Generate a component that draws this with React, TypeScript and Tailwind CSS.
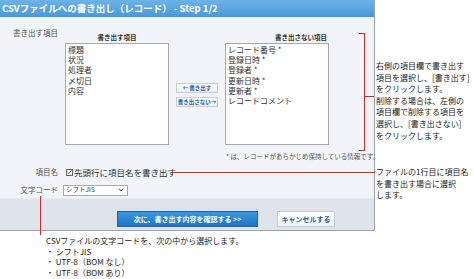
const jp = "font-['Noto_Sans_CJK_JP','Noto_Sans',sans-serif]";

const leftItems = ["標題", "状況", "処理者", "〆切日", "内容"];
const rightItems = ["レコード番号 *", "登録日時 *", "登録者 *", "更新日時 *", "更新者 *", "レコードコメント"];

function ListBox({ items }: { items: string[] }) {
  return (
    <div className="w-[104px] h-[102px] bg-white border border-[#a9a9a9] px-[2px] pt-[1px] text-[8px] leading-[10.2px] text-[#333]">
      {items.map((it) => (
        <div key={it} className="whitespace-nowrap">{it}</div>
      ))}
    </div>
  );
}

function SmallButton({ children }: { children: React.ReactNode }) {
  return (
    <div className="w-[42px] h-[10px] flex items-center justify-center border border-[#c6ced6] bg-gradient-to-b from-white to-[#e9eef3] text-[5.5px] leading-[8px] font-bold text-[#2b62a8] whitespace-nowrap">
      {children}
    </div>
  );
}

export default function App() {
  return (
    <div className={`relative w-[474px] h-[279px] bg-white overflow-hidden ${jp}`}>
      <div className="flex">
        {/* window */}
        <div className="w-[375px] border-r border-b border-[#9aa3ad] shrink-0">
          <div className="h-[17px] bg-gradient-to-b from-[#6db3e8] to-[#4a98d8] text-white font-bold text-[9.5px] leading-[17px] pl-[2px] whitespace-nowrap">
            CSVファイルへの書き出し（レコード） - Step 1/2
          </div>
          <div className="h-[181px] bg-[#f1f5f9] pt-[11px]">
            <div className="flex">
              <div className="w-[58px] text-right text-[7.5px] leading-[10px] text-[#555]">書き出す項目</div>
              <div className="ml-[7px] pt-[4px]">
                <div className="h-[11px] text-center text-[6.5px] font-bold text-[#333] leading-[11px]">書き出す項目</div>
                <ListBox items={leftItems} />
              </div>
              <div className="w-[56px] pt-[55px] flex flex-col items-center gap-[4px]">
                <SmallButton>← 書き出す</SmallButton>
                <SmallButton>書き出さない→</SmallButton>
              </div>
              <div className="pt-[4px]">
                <div className="h-[11px] text-right pr-[2px] text-[6.5px] font-bold text-[#333] leading-[11px]">書き出さない項目</div>
                <ListBox items={rightItems} />
              </div>
            </div>
            <div className="mt-[6px] pl-[226px] text-[6.5px] leading-[10px] text-[#555] whitespace-nowrap">
              * は、レコードがあらかじめ保持している情報です。
            </div>
            <div className="mt-[5px] flex items-center h-[12px]">
              <div className="w-[58px] text-right text-[7.5px] text-[#555]">項目名</div>
              <div className="ml-[8px] flex items-center gap-[1px] text-[8.5px] text-[#333]">
                <span className="w-[7px] h-[7px] border border-[#666] bg-white flex items-center justify-center">
                  <svg viewBox="0 0 8 8" className="w-[6px] h-[6px]">
                    <path d="M1 4.2 L3.2 6.3 L7 1.5" fill="none" stroke="#333" strokeWidth="1.2" />
                  </svg>
                </span>
                先頭行に項目名を書き出す
              </div>
            </div>
            <div className="mt-[6px] flex items-center h-[12px]">
              <div className="w-[58px] text-right text-[7.5px] text-[#555]">文字コード</div>
              <div className="ml-[5px] w-[65px] h-[11px] border border-[#a9a9a9] bg-white flex items-center justify-between pl-[2px] pr-[3px] text-[6.5px] text-[#333]">
                <span>シフトJIS</span>
                <svg viewBox="0 0 8 6" className="w-[6px] h-[4px]">
                  <path d="M1 1 L4 4.5 L7 1" fill="none" stroke="#333" strokeWidth="1.4" />
                </svg>
              </div>
            </div>
          </div>
          <div className="h-[32px] bg-[#dfe4ea] border-t border-[#e8ecf0] pt-[12px] flex pl-[117px] gap-[19px]">
            <div className="w-[141px] h-[16px] bg-gradient-to-b from-[#3b98e0] to-[#1f74c4] border border-[#1d66ad] text-white font-bold text-[7px] flex items-center justify-center whitespace-nowrap">
              次に、書き出す内容を確認する &gt;&gt;
            </div>
            <div className="w-[58px] h-[16px] bg-gradient-to-b from-white to-[#f0f2f4] border border-[#c5ccd3] text-[#2b62a8] font-bold text-[7px] flex items-center justify-center whitespace-nowrap">
              キャンセルする
            </div>
          </div>
        </div>
        {/* right callouts */}
        <div className="pl-[1px] pt-[60px] text-[8px] leading-[11.6px] text-[#222] whitespace-nowrap">
          <div>
            右側の項目欄で書き出す<br />
            項目を選択し、[書き出す]<br />
            をクリックします。<br />
            削除する場合は、左側の<br />
            項目欄で削除する項目を<br />
            選択し、[書き出さない]<br />
            をクリックします。
          </div>
          <div className="mt-[25px]">
            ファイルの1行目に項目名<br />
            を書き出す場合に選択<br />
            します。
          </div>
        </div>
      </div>
      <div className="mt-[5px] pl-[46px] text-[8px] leading-[10.5px] text-[#222] whitespace-nowrap">
        <div>CSVファイルの文字コードを、次の中から選択します。</div>
        <div>・ シフトJIS</div>
        <div>・ UTF-8（BOM なし）</div>
        <div>・ UTF-8（BOM あり）</div>
      </div>

      {/* red callout lines */}
      <div className="absolute left-[359px] top-[33px] w-[6px] h-[1px] bg-[#d9252b]" />
      <div className="absolute left-[364px] top-[33px] w-[1px] h-[118px] bg-[#d9252b]" />
      <div className="absolute left-[359px] top-[150px] w-[6px] h-[1px] bg-[#d9252b]" />
      <div className="absolute left-[364px] top-[96px] w-[10px] h-[1px] bg-[#d9252b]" />
      <div className="absolute left-[171px] top-[172px] w-[204px] h-[1px] bg-[#d9252b]" />
      <div className="absolute left-[40px] top-[196px] w-[1px] h-[39px] bg-[#d9252b]" />
    </div>
  );
}
